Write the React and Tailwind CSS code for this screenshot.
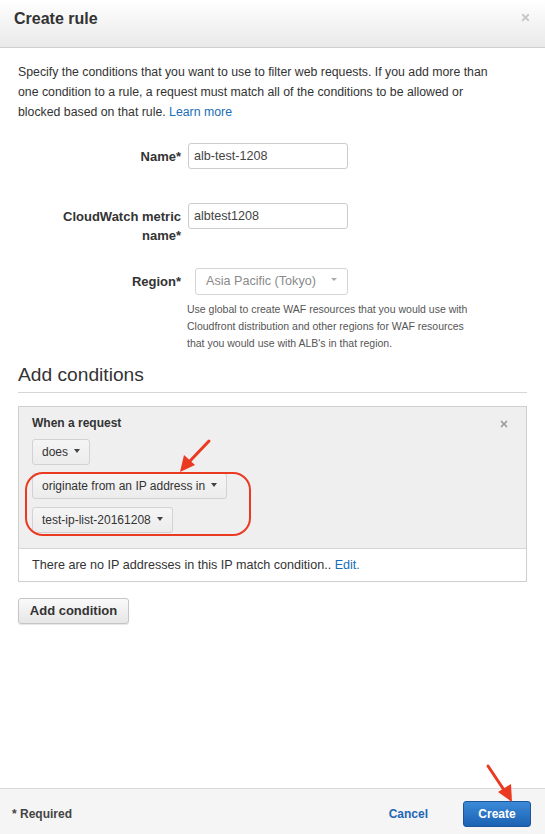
import { X } from "lucide-react";

function Caret() {
  return (
    <span className="inline-block ml-[6px] align-middle border-x-[3px] border-x-transparent border-t-[4px] border-t-[#444] mb-[2px]" />
  );
}

function DropButton({ label }) {
  return (
    <button className="h-[26px] pl-[9px] pr-[9px] text-[12px] text-[#333] bg-gradient-to-b from-[#f5f5f5] to-[#ececec] border border-[#d2d2d2] rounded-[3px] flex items-center">
      {label}
      <Caret />
    </button>
  );
}

function FormRow({ label, children, className = "" }) {
  return (
    <div className={`flex ${className}`}>
      <div className="w-[165px] text-right text-[13px] font-bold text-[#333] leading-[19px] pt-[4px] pr-[2px]">
        {label}
      </div>
      <div className="ml-[5px]">{children}</div>
    </div>
  );
}

function App() {
  return (
    <div
      className="relative w-[545px] h-[834px] bg-white flex flex-col text-[#333] overflow-hidden"
      style={{ fontFamily: '"Liberation Sans", Arial, sans-serif' }}
    >
      <div className="h-[48px] shrink-0 flex items-center justify-between px-[14px] bg-gradient-to-b from-white to-[#e9e9e9] border-b border-[#cfcfcf]">
        <h2 className="text-[16px] font-bold text-[#333] -mt-[10px]">Create rule</h2>
        <X className="w-[11px] h-[11px] text-[#c8c8c8] -mt-[12px]" strokeWidth={4} />
      </div>

      <div className="flex-1 px-[18px] pt-[14px]">
        <p className="w-[474px] text-[12.3px] leading-[20px] text-[#333]">
          Specify the conditions that you want to use to filter web requests. If you add more than
          one condition to a rule, a request must match all of the conditions to be allowed or
          blocked based on that rule. <span className="text-[#1a6db6]">Learn more</span>
        </p>

        <FormRow label="Name*" className="mt-[21px]">
          <div className="w-[160px] h-[26px] border border-[#ccc] rounded-[3px] px-[5px] text-[12.6px] leading-[24px] text-[#444]">
            alb-test-1208
          </div>
        </FormRow>

        <FormRow label={<>CloudWatch metric<br />name*</>} className="mt-[34px]">
          <div className="w-[160px] h-[26px] border border-[#ccc] rounded-[3px] px-[5px] text-[12.6px] leading-[24px] text-[#444]">
            albtest1208
          </div>
        </FormRow>

        <FormRow label="Region*" className="mt-[23px]">
          <div className="ml-[7px] w-[153px] h-[27px] border border-[#d5d5d5] rounded-[3px] pl-[10px] pr-[10px] text-[12.6px] leading-[25px] text-[#8a8a8a] flex items-center justify-between">
            Asia Pacific (Tokyo)
            <span className="inline-block border-x-[3px] border-x-transparent border-t-[3px] border-t-[#aaa] -mt-[4px]" />
          </div>
          <p className="mt-[6px] ml-[-1px] text-[10.5px] leading-[17px] text-[#555] w-[290px]">
            Use global to create WAF resources that you would use with Cloudfront distribution and
            other regions for WAF resources that you would use with ALB's in that region.
          </p>
        </FormRow>

        <h3 className="mt-[10px] text-[19.2px] leading-[26px] text-[#333] pb-[4px] border-b border-[#d6d6d6]">
          Add conditions
        </h3>

        <div className="mt-[13px] border border-[#cfcfcf]">
          <div className="bg-[#efefef] px-[13px] pt-[8px] pb-[15px] border-b border-[#d6d6d6]">
            <div className="flex items-center justify-between">
              <span className="text-[12px] font-bold leading-[17px]">When a request</span>
              <X className="w-[10px] h-[10px] text-[#999] mr-[4px]" strokeWidth={4} />
            </div>
            <div className="mt-[7px] flex flex-col items-start gap-[8px]">
              <DropButton label="does" />
              <DropButton label="originate from an IP address in" />
              <DropButton label="test-ip-list-20161208" />
            </div>
          </div>
          <div className="px-[13px] h-[32px] flex items-center text-[12.6px] text-[#333]">
            There are no IP addresses in this IP match condition..&nbsp;
            <span className="text-[#1a6db6]">Edit.</span>
          </div>
        </div>

        <button className="mt-[16px] h-[26px] w-[111px] text-[13px] font-bold text-[#333] bg-gradient-to-b from-[#fafafa] to-[#e6e6e6] border border-[#c5c5c5] rounded-[3px] shadow-[0_1px_1px_rgba(0,0,0,0.1)]">
          Add condition
        </button>
      </div>

      <div className="h-[46px] shrink-0 bg-[#f5f5f5] border-t border-[#d9d9d9] flex items-center justify-between pl-[12px] pr-[14px]">
        <span className="text-[12px] font-bold text-[#444] mt-[5px]">* Required</span>
        <div className="flex items-center mt-[5px]">
          <span className="text-[12px] font-bold text-[#1f66b4] mr-[35px]">Cancel</span>
          <button className="w-[68px] h-[26px] rounded-[3px] bg-gradient-to-b from-[#3b8ad8] to-[#1b62b3] border border-[#1a5699] text-white text-[12px] font-bold">
            Create
          </button>
        </div>
      </div>

      {/* annotation overlays */}
      <div className="absolute left-[25px] top-[472px] w-[226px] h-[64px] border-[2.5px] border-[#ea3a22] rounded-[18px]" />
      <svg className="absolute left-0 top-0 pointer-events-none" width="545" height="834">
        <line x1="209" y1="441" x2="190" y2="461" stroke="#ea3a22" strokeWidth="3" strokeLinecap="round" />
        <polygon points="180,472 184,455 195,465" fill="#ea3a22" />
        <line x1="488" y1="766" x2="504" y2="790" stroke="#ea3a22" strokeWidth="3" strokeLinecap="round" />
        <polygon points="512,802 498,792 511,784" fill="#ea3a22" />
      </svg>
    </div>
  );
}

export default App;
